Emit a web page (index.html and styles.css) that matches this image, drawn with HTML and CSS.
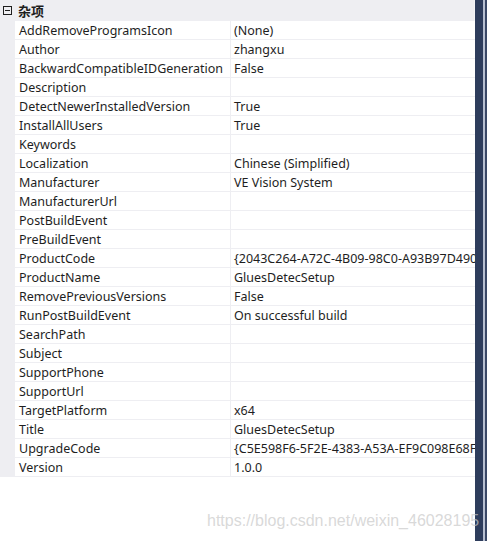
FILE: index.html
```html
<!DOCTYPE html>
<html lang="zh">
<head>
    <meta charset="UTF-8">
    <title>Properties</title>
    <link rel="stylesheet" href="styles.css">
</head>
<body>
<div class="window">
    <div class="props">
        <div class="category">
            <span class="toggle"></span>
            <span class="cat-name">杂项</span>
        </div>
        <div class="rows">
            <div class="row"><div class="name">AddRemoveProgramsIcon</div><div class="value">(None)</div></div>
            <div class="row"><div class="name">Author</div><div class="value">zhangxu</div></div>
            <div class="row"><div class="name">BackwardCompatibleIDGeneration</div><div class="value">False</div></div>
            <div class="row"><div class="name">Description</div><div class="value"></div></div>
            <div class="row"><div class="name">DetectNewerInstalledVersion</div><div class="value">True</div></div>
            <div class="row"><div class="name">InstallAllUsers</div><div class="value">True</div></div>
            <div class="row"><div class="name">Keywords</div><div class="value"></div></div>
            <div class="row"><div class="name">Localization</div><div class="value">Chinese (Simplified)</div></div>
            <div class="row"><div class="name">Manufacturer</div><div class="value">VE Vision System</div></div>
            <div class="row"><div class="name">ManufacturerUrl</div><div class="value"></div></div>
            <div class="row"><div class="name">PostBuildEvent</div><div class="value"></div></div>
            <div class="row"><div class="name">PreBuildEvent</div><div class="value"></div></div>
            <div class="row"><div class="name">ProductCode</div><div class="value">{2043C264-A72C-4B09-98C0-A93B97D490C1}</div></div>
            <div class="row"><div class="name">ProductName</div><div class="value">GluesDetecSetup</div></div>
            <div class="row"><div class="name">RemovePreviousVersions</div><div class="value">False</div></div>
            <div class="row"><div class="name">RunPostBuildEvent</div><div class="value">On successful build</div></div>
            <div class="row"><div class="name">SearchPath</div><div class="value"></div></div>
            <div class="row"><div class="name">Subject</div><div class="value"></div></div>
            <div class="row"><div class="name">SupportPhone</div><div class="value"></div></div>
            <div class="row"><div class="name">SupportUrl</div><div class="value"></div></div>
            <div class="row"><div class="name">TargetPlatform</div><div class="value">x64</div></div>
            <div class="row"><div class="name">Title</div><div class="value">GluesDetecSetup</div></div>
            <div class="row"><div class="name">UpgradeCode</div><div class="value">{C5E598F6-5F2E-4383-A53A-EF9C098E68F2}</div></div>
            <div class="row"><div class="name">Version</div><div class="value">1.0.0</div></div>
        </div>
    </div>
    <div class="scrollbar"><div class="thumb"></div><div class="edge"></div></div>
    <div class="watermark">https://blog.csdn.net/weixin_46028195</div>
</div>
</body>
</html>
```

FILE: styles.css
```css
body {
    margin: 0;
    background: #fff;
    font-family: "Noto Sans", "Noto Sans CJK SC", sans-serif;
    font-size: 12.5px;
    color: #1e1e1e;
}
.window {
    position: relative;
    display: flex;
    width: 489px;
    height: 541px;
    overflow: hidden;
}
.props {
    width: 475px;
    flex-shrink: 0;
}
.category {
    height: 21px;
    background: #eeeef2;
    display: flex;
    align-items: center;
    border-right: 1px solid #f4f4f7;
}
.toggle {
    width: 7px;
    height: 7px;
    border: 1px solid #1e1e1e;
    margin-left: 3px;
    margin-right: 6px;
    position: relative;
}
.toggle::after {
    content: '';
    position: absolute;
    left: 1px;
    right: 1px;
    top: 3px;
    height: 1px;
    background: #1e1e1e;
}
.cat-name {
    font-weight: bold;
    font-size: 13px;
}
.rows {
    background: #eeeef2;
    padding-left: 15px;
}
.row {
    display: flex;
    height: 18px;
    border-bottom: 1px solid #eeeef2;
    background: #fff;
    line-height: 18px;
}
.name, .value {
    box-sizing: border-box;
    padding-top: 1px;
    white-space: nowrap;
    overflow: hidden;
}
.name {
    width: 216px;
    padding-left: 4px;
    border-right: 1px solid #eeeef2;
}
.value {
    flex: 1;
    padding-left: 3px;
}
.scrollbar {
    display: flex;
    width: 14px;
}
.thumb {
    width: 8px;
    background: #2e3d5c;
    border-right: 2px solid #b7bfd0;
}
.edge {
    width: 2px;
    background: #3a4866;
}
.watermark {
    position: absolute;
    left: 207px;
    top: 512px;
    font-family: "Liberation Sans", Arial, sans-serif;
    font-size: 16px;
    color: rgba(200, 200, 200, 0.7);
    white-space: nowrap;
}
```
